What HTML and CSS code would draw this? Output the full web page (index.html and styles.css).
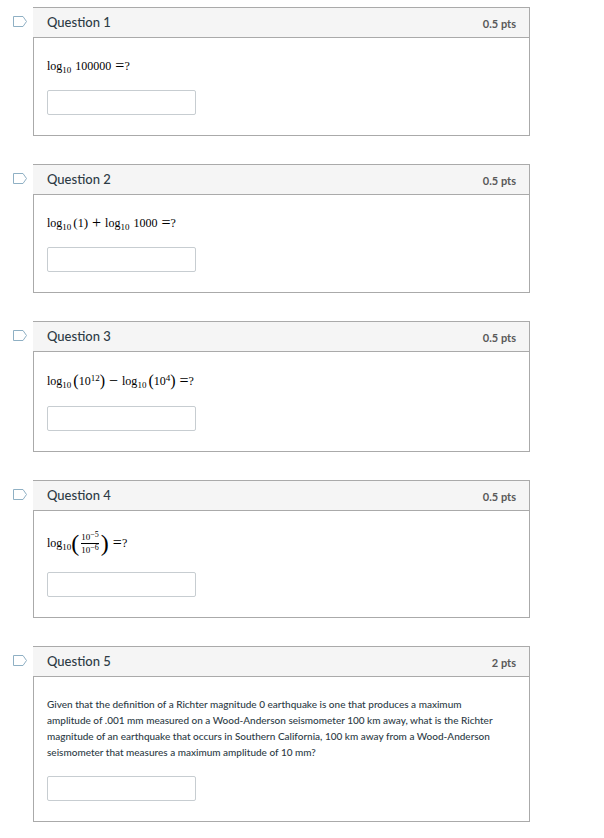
FILE: index.html
```html
<!DOCTYPE html>
<html lang="en">
<head>
    <meta charset="UTF-8">
    <meta name="viewport" content="width=device-width, initial-scale=1.0">
    <title>Quiz</title>
    <link rel="stylesheet" href="styles.css">
</head>

<body>

    <form class="quiz">
        <div class="question">
            <button class="flag" type="button" aria-label="Flag question 1">
                <svg width="14" height="11" viewBox="0 0 14 11"><path d="M0.5 0.5H10L13.5 5.5L10 10.5H0.5Z"/></svg>
            </button>
            <section class="card">
                <div class="card-header">
                    <h2>Question 1</h2>
                    <span class="points">0.5 pts</span>
                </div>
                <div class="card-body">
                    <label class="math" for="answer1">log<sub>10</sub><span class="arg">100000</span><span class="equals">=</span>?</label>
                    <input type="text" id="answer1">
                </div>
            </section>
        </div>

        <div class="question">
            <button class="flag" type="button" aria-label="Flag question 2">
                <svg width="14" height="11" viewBox="0 0 14 11"><path d="M0.5 0.5H10L13.5 5.5L10 10.5H0.5Z"/></svg>
            </button>
            <section class="card">
                <div class="card-header">
                    <h2>Question 2</h2>
                    <span class="points">0.5 pts</span>
                </div>
                <div class="card-body">
                    <label class="math" for="answer2">log<sub>10</sub><span class="paren">(</span>1<span class="paren">)</span><span class="operator">+</span>log<sub>10</sub><span class="arg">1000</span><span class="equals">=</span>?</label>
                    <input type="text" id="answer2">
                </div>
            </section>
        </div>

        <div class="question">
            <button class="flag" type="button" aria-label="Flag question 3">
                <svg width="14" height="11" viewBox="0 0 14 11"><path d="M0.5 0.5H10L13.5 5.5L10 10.5H0.5Z"/></svg>
            </button>
            <section class="card">
                <div class="card-header">
                    <h2>Question 3</h2>
                    <span class="points">0.5 pts</span>
                </div>
                <div class="card-body">
                    <label class="math math-power" for="answer3">log<sub>10</sub><span class="paren">(</span>10<sup>12</sup><span class="paren">)</span><span class="operator">−</span>log<sub>10</sub><span class="paren">(</span>10<sup>4</sup><span class="paren">)</span><span class="equals">=</span>?</label>
                    <input type="text" id="answer3">
                </div>
            </section>
        </div>

        <div class="question">
            <button class="flag" type="button" aria-label="Flag question 4">
                <svg width="14" height="11" viewBox="0 0 14 11"><path d="M0.5 0.5H10L13.5 5.5L10 10.5H0.5Z"/></svg>
            </button>
            <section class="card">
                <div class="card-header">
                    <h2>Question 4</h2>
                    <span class="points">0.5 pts</span>
                </div>
                <div class="card-body">
                    <label class="math math-fraction" for="answer4"><span>log<sub>10</sub></span><span class="big-paren">(</span><span class="fraction"><span>10<sup>−5</sup></span><span class="denominator">10<sup>−6</sup></span></span><span class="big-paren">)</span><span><span class="equals">=</span>?</span></label>
                    <input type="text" id="answer4">
                </div>
            </section>
        </div>

        <div class="question">
            <button class="flag" type="button" aria-label="Flag question 5">
                <svg width="14" height="11" viewBox="0 0 14 11"><path d="M0.5 0.5H10L13.5 5.5L10 10.5H0.5Z"/></svg>
            </button>
            <section class="card">
                <div class="card-header">
                    <h2>Question 5</h2>
                    <span class="points">2 pts</span>
                </div>
                <div class="card-body">
                    <label class="text" for="answer5">Given that the definition of a Richter magnitude 0 earthquake is one that produces a maximum amplitude of .001 mm measured on a Wood-Anderson seismometer 100 km away, what is the Richter magnitude of an earthquake that occurs in Southern California, 100 km away from a Wood-Anderson seismometer that measures a maximum amplitude of 10 mm?</label>
                    <input type="text" id="answer5">
                </div>
            </section>
        </div>
    </form>

</body>
</html>
```
FILE: styles.css
```css
* {
    margin: 0;
    padding: 0;
    box-sizing: border-box;
}

body {
    background: #fff;
    color: #2d3b45;
    font-family: Lato, "Liberation Sans", sans-serif;
    font-size: 11px;
    line-height: 16px;
}

.quiz {
    display: flex;
    flex-direction: column;
    gap: 28px;
    padding: 7px 74px 16px 13px;
}

.question {
    display: flex;
    align-items: flex-start;
    gap: 6px;
}

.flag {
    width: 14px;
    height: 11px;
    margin-top: 9px;
    border: none;
    background: none;
    cursor: pointer;
}

.flag svg {
    display: block;
    fill: #fff;
    stroke: #8fb0c4;
}

.card {
    flex: 1;
}

.card-header {
    display: flex;
    justify-content: space-between;
    align-items: center;
    height: 31px;
    padding: 0 13px 0 14px;
    background: #f5f5f5;
    border: 1px solid #aaa;
    border-left: none;
}

.card-header h2 {
    padding-bottom: 1px;
    font-size: 13px;
    font-weight: 500;
}

.points {
    padding-top: 2px;
    color: #595959;
    font-weight: bold;
}

.card-body {
    padding: 19px 13px 20px;
    border: 1px solid #aaa;
    border-top: none;
}

.card-body input {
    display: block;
    width: 149px;
    height: 25px;
    margin-top: 16px;
    padding: 0 6px;
    border: 1px solid #c7cdd1;
    border-radius: 2px;
    font: inherit;
}

.text {
    display: block;
    max-width: 456px;
    font-size: 10px;
    font-weight: 500;
}

/* formulas */
.math {
    display: block;
    padding-top: 2px;
    color: #000;
    font-family: "Liberation Serif", serif;
    font-size: 12px;
    line-height: 15px;
}

.math sub,
.math sup {
    font-size: 9px;
    line-height: 0;
}

.math sub {
    vertical-align: -3px;
}

.math sup {
    vertical-align: 4px;
}

.arg {
    margin-left: 4px;
}

.equals,
.operator {
    font-size: 16px;
    line-height: 0;
    vertical-align: -1px;
}

.equals {
    margin-left: 4px;
}

.operator {
    margin: 0 4px;
}

.paren {
    font-size: 13px;
    line-height: 0;
}

sub + .paren {
    margin-left: 2px;
}

.math-power {
    line-height: 17px;
}

.math-power .paren {
    font-size: 16px;
    vertical-align: -1px;
}

.math-fraction {
    display: flex;
    align-items: center;
    height: 26px;
    padding-top: 0;
}

.big-paren {
    font-size: 24px;
    line-height: 26px;
}

.fraction {
    display: flex;
    flex-direction: column;
    margin: 0 2px;
    font-size: 9px;
    line-height: 12px;
}

.fraction sup {
    font-size: 8px;
    vertical-align: 3px;
}

.denominator {
    border-top: 1px solid #000;
}
```
